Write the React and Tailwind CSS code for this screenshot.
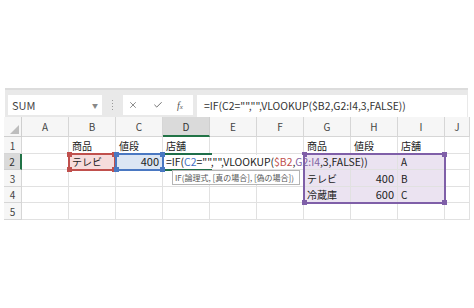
import React from 'react'
import { X, Check } from 'lucide-react'

const COLS = ['A', 'B', 'C', 'D', 'E', 'F', 'G', 'H', 'I', 'J']
const ROWS = [1, 2, 3, 4, 5]

const CELLS = {
  B1: '商品', C1: '値段', D1: '店舗', G1: '商品', H1: '値段', I1: '店舗',
  B2: 'テレビ', C2: '400', I2: 'A',
  G3: 'テレビ', H3: '400', I3: 'B',
  G4: '冷蔵庫', H4: '600', I4: 'C',
}

const FILLS = {
  B2: 'bg-[#f6dcdc]',
  C2: 'bg-[#dce6f4]',
  G2: 'bg-[#ebe3f1]', H2: 'bg-[#ebe3f1]', I2: 'bg-[#ebe3f1]',
  G3: 'bg-[#ebe3f1]', H3: 'bg-[#ebe3f1]', I3: 'bg-[#ebe3f1]',
  G4: 'bg-[#ebe3f1]', H4: 'bg-[#ebe3f1]', I4: 'bg-[#ebe3f1]',
}

function Corners({ color }) {
  return (
    <>
      <span className={`absolute -left-[3px] -top-[3px] w-[5px] h-[5px] ${color}`} />
      <span className={`absolute -right-[3px] -top-[3px] w-[5px] h-[5px] ${color}`} />
      <span className={`absolute -left-[3px] -bottom-[3px] w-[5px] h-[5px] ${color}`} />
      <span className={`absolute -right-[3px] -bottom-[3px] w-[5px] h-[5px] ${color}`} />
    </>
  )
}

function Toolbar() {
  return (
    <div className="ml-[5px] w-[463px] h-[29px] bg-[#e9e9e9] border-t-2 border-[#dcdcdc] flex items-start pt-[5px]">
      <div className="ml-[3px] w-[94px] h-[20px] bg-white flex items-center justify-between pl-[4px] pr-[4px] text-[11px] text-[#444]">
        <span>SUM</span>
        <span className="text-[6px] text-[#888]">▼</span>
      </div>
      <div className="w-[21px] h-[20px] flex flex-col items-center justify-center gap-[2px]">
        <span className="w-[1px] h-[1px] bg-[#999]" />
        <span className="w-[1px] h-[1px] bg-[#999]" />
        <span className="w-[1px] h-[1px] bg-[#999]" />
        <span className="w-[1px] h-[1px] bg-[#999]" />
      </div>
      <div className="w-[70px] h-[20px] bg-white flex items-center text-[#555]">
        <X size={10} strokeWidth={1.6} className="ml-[5px]" />
        <Check size={10} strokeWidth={2} className="ml-[15px]" />
        <span className="ml-[14px] font-['Liberation_Serif',serif] italic text-[10px]">f<span className="text-[7px]">x</span></span>
      </div>
      <div className="ml-[4px] mr-[1px] flex-1 h-[22px] bg-white flex items-center pl-[7px] text-[10.4px] text-[#333] whitespace-nowrap">
        {'=IF(C2="","",VLOOKUP($B2,G2:I4,3,FALSE))'}
      </div>
    </div>
  )
}

function Grid() {
  return (
    <div className="relative ml-[4px] w-[466px]">
      <div className="grid grid-cols-[18px_repeat(9,47px)_25px] grid-rows-[20px_17px_16px_17px_16px_17px] text-[10px]">
        <div className="bg-[#f6f6f6] border-r border-b border-[#cfcfcf] relative">
          <span className="absolute right-[2px] bottom-[2px] w-0 h-0 border-l-[9px] border-l-transparent border-b-[9px] border-b-[#bdbdbd]" />
        </div>
        {COLS.map(c => (
          <div key={c}
            className={c === 'D'
              ? 'bg-[#dadada] border-r border-[#cfcfcf] border-b-2 border-b-[#217346] flex items-center justify-center text-[#333]'
              : 'bg-[#f6f6f6] border-r border-b border-[#d6d6d6] flex items-center justify-center text-[#444]'}>
            {c}
          </div>
        ))}
        {ROWS.map(r => (
          <React.Fragment key={r}>
            <div className={r === 2
              ? 'bg-[#dadada] border-b border-[#cfcfcf] border-r-2 border-r-[#217346] flex items-center justify-center text-[#333]'
              : 'bg-[#f6f6f6] border-r border-b border-[#d6d6d6] flex items-center justify-center text-[#444]'}>
              {r}
            </div>
            {COLS.map(c => {
              const key = `${c}${r}`
              const text = CELLS[key]
              const numeric = text && /^\d+$/.test(text)
              return (
                <div key={key}
                  className={`border-r border-b border-[#e1e1e1] flex items-center px-[3px] text-[#222] ${FILLS[key] || 'bg-white'} ${numeric ? 'justify-end text-[11px]' : 'justify-start'}`}>
                  {text}
                </div>
              )
            })}
          </React.Fragment>
        ))}
      </div>

      {/* 参照範囲 */}
      <div className="absolute left-[64px] top-[36px] w-[48px] h-[18px] border-2 border-[#c0504d]">
        <Corners color="bg-[#c0504d]" />
      </div>
      <div className="absolute left-[111px] top-[36px] w-[49px] h-[18px] border-2 border-[#4a78c2]">
        <Corners color="bg-[#4a78c2]" />
      </div>
      <div className="absolute left-[299px] top-[36px] w-[143px] h-[51px] border-2 border-[#7f5fa8]">
        <Corners color="bg-[#7f5fa8]" />
      </div>

      {/* 編集中のセル */}
      <div className="absolute left-[161px] top-[38px] w-[138px] h-[14px] bg-white" />
      <div className="absolute left-[161px] top-[36px] w-[47px] h-[2px] bg-[#1f6e4a]" />
      <div className="absolute left-[161px] top-[52px] w-[47px] h-[2px] bg-[#1f6e4a]" />
      <div className="absolute left-[162px] top-[37px] h-[16px] flex items-center text-[10.4px] text-[#222] whitespace-nowrap">
        <span>=IF(</span>
        <span className="text-[#4472c4]">C2</span>
        <span>="","",VLOOKUP(</span>
        <span className="text-[#c0504d]">$B2</span>
        <span>,</span>
        <span className="text-[#8064a2]">G2:I4</span>
        <span>,3,FALSE))</span>
      </div>

      {/* 関数のヒント */}
      <div className="absolute left-[168px] top-[53px] w-[128px] h-[15px] bg-white border border-[#b5b5b5] flex items-center px-[2px] text-[8px] text-[#555] whitespace-nowrap">
        IF(論理式, [真の場合], [偽の場合])
      </div>
    </div>
  )
}

export default function App() {
  return (
    <div className="w-[474px] h-[308px] bg-white overflow-hidden font-['Noto_Sans_CJK_JP',sans-serif]">
      <div className="h-[88px]" />
      <Toolbar />
      <Grid />
    </div>
  )
}
